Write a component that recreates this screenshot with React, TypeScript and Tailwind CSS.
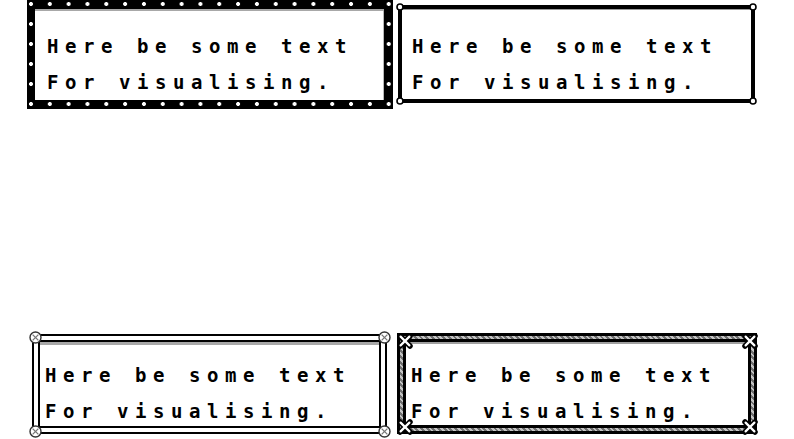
import React from "react";

const LINES = ["Here be some text", "For visualising."];

function Caption() {
  return (
    <div className="whitespace-pre text-black font-bold text-[19px] leading-[36px] tracking-[6.56px] [font-family:'DejaVu_Sans_Mono',monospace]">
      {LINES.map((l) => (
        <div key={l}>{l}</div>
      ))}
    </div>
  );
}

function Ring() {
  return (
    <svg width="8" height="8" viewBox="0 0 8 8" className="block">
      <circle cx="4" cy="4" r="3" fill="#fff" stroke="#000" strokeWidth="1.6" />
    </svg>
  );
}

function CrossRing() {
  return (
    <svg width="13" height="13" viewBox="0 0 13 13" className="block">
      <circle cx="6.5" cy="6.5" r="5.5" fill="#fff" stroke="#333" strokeWidth="1.4" />
      <path d="M3.6 3.6 L9.4 9.4 M9.4 3.6 L3.6 9.4" stroke="#777" strokeWidth="1.3" />
    </svg>
  );
}

function Star() {
  return (
    <svg width="16" height="16" viewBox="0 0 16 16" className="block">
      <path d="M3 3 L13 13 M13 3 L3 13" stroke="#000" strokeWidth="5.5" strokeLinecap="round" />
      <path d="M3.6 3.6 L12.4 12.4 M12.4 3.6 L3.6 12.4" stroke="#fff" strokeWidth="2.2" strokeLinecap="round" />
    </svg>
  );
}

// Beaded frame: black band with a row of white studs
function BeadFrame() {
  return (
    <div className="w-[366px] h-[109px] pl-[8px] pr-[9px] py-[9px] bg-black bg-[radial-gradient(circle_at_4px_4px,#fff_1.6px,transparent_2.3px)] bg-[length:18.84px_20px]">
      <div className="h-full bg-white shadow-[inset_0_2px_0_#a8a8a8,inset_-1px_0_0_#b8b8b8] pl-[12px] pt-[19px]">
        <Caption />
      </div>
    </div>
  );
}

// Plain rail frame with ring joints
function RailFrame() {
  return (
    <div className="relative w-[357px] h-[98px] mt-[5px] ml-[5px] border-4 border-black bg-white">
      <div className="h-full shadow-[inset_0_1px_0_#9a9a9a] pl-[10px] pt-[19px]">
        <Caption />
      </div>
      <span className="absolute -left-[6px] -top-[6px]"><Ring /></span>
      <span className="absolute -right-[6px] -top-[6px]"><Ring /></span>
      <span className="absolute -left-[6px] -bottom-[6px]"><Ring /></span>
      <span className="absolute -right-[6px] -bottom-[6px]"><Ring /></span>
    </div>
  );
}

// Double rail frame with crossed ring joints
function DoubleFrame() {
  return (
    <div className="relative w-[355px] h-[100px] mt-[1px] border-2 border-black bg-white p-[4px]">
      <div className="h-full border-2 border-black shadow-[inset_0_3px_0_#a8a8a8] pl-[5px] pt-[15px]">
        <Caption />
      </div>
      <span className="absolute -left-[5.5px] -top-[5.5px]"><CrossRing /></span>
      <span className="absolute -right-[5.5px] -top-[5.5px]"><CrossRing /></span>
      <span className="absolute -left-[5.5px] -bottom-[5.5px]"><CrossRing /></span>
      <span className="absolute -right-[5.5px] -bottom-[5.5px]"><CrossRing /></span>
    </div>
  );
}

// Braided frame: two black rails with a grey weave between, star joints
function BraidFrame() {
  return (
    <div className="relative w-[360px] h-[101px] ml-[10px] border-[3px] border-black p-[3px] bg-[repeating-linear-gradient(45deg,#6f6f6f_0px,#6f6f6f_2px,#c4c4c4_2px,#c4c4c4_4px)]">
      <div className="h-full border-[3px] border-black bg-white shadow-[inset_0_2px_0_#a0a0a0] pl-[5px] pt-[15px]">
        <Caption />
      </div>
      <span className="absolute -left-[3.5px] -top-[3.5px]"><Star /></span>
      <span className="absolute -right-[3.5px] -top-[3.5px]"><Star /></span>
      <span className="absolute -left-[3.5px] -bottom-[3.5px]"><Star /></span>
      <span className="absolute -right-[3.5px] -bottom-[3.5px]"><Star /></span>
    </div>
  );
}

export default function App() {
  return (
    <div className="w-[794px] h-[439px] overflow-hidden bg-white flex flex-col justify-between pb-[5px]">
      <div className="flex items-start pl-[27px]">
        <BeadFrame />
        <RailFrame />
      </div>
      <div className="flex items-start pl-[32px]">
        <DoubleFrame />
        <BraidFrame />
      </div>
    </div>
  );
}
